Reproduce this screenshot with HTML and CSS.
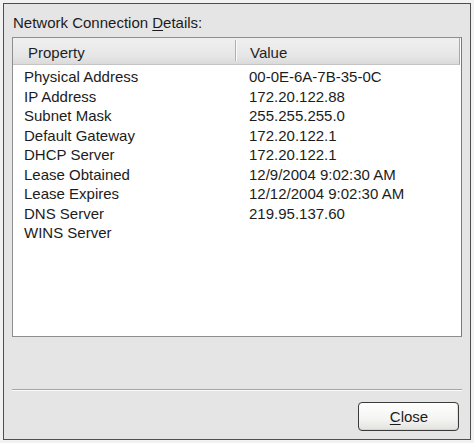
FILE: index.html
```html
<!DOCTYPE html>
<html>
<head>
<meta charset="utf-8">
<link rel="stylesheet" href="styles.css">
</head>
<body>
<div class="dialog">
  <div class="caption">Network Connection <u>D</u>etails:</div>
  <div class="list">
    <div class="header">
      <div class="hcell hprop">Property</div>
      <div class="hdiv"></div>
      <div class="hcell hval">Value</div>
    </div>
    <div class="rows">
      <div class="row"><span class="k">Physical Address</span><span class="v">00-0E-6A-7B-35-0C</span></div>
      <div class="row"><span class="k">IP Address</span><span class="v">172.20.122.88</span></div>
      <div class="row"><span class="k">Subnet Mask</span><span class="v">255.255.255.0</span></div>
      <div class="row"><span class="k">Default Gateway</span><span class="v">172.20.122.1</span></div>
      <div class="row"><span class="k">DHCP Server</span><span class="v">172.20.122.1</span></div>
      <div class="row"><span class="k">Lease Obtained</span><span class="v">12/9/2004 9:02:30 AM</span></div>
      <div class="row"><span class="k">Lease Expires</span><span class="v">12/12/2004 9:02:30 AM</span></div>
      <div class="row"><span class="k">DNS Server</span><span class="v">219.95.137.60</span></div>
      <div class="row"><span class="k">WINS Server</span><span class="v"></span></div>
    </div>
  </div>
  <div class="sep"></div>
  <div class="footer">
    <button class="btn"><u>C</u>lose</button>
  </div>
</div>
</body>
</html>
```

FILE: styles.css
```css
html, body {
  margin: 0;
  padding: 0;
  background: #f2f2f2;
}
body {
  font-family: "Liberation Sans", Arial, sans-serif;
  font-size: 15px;
  color: #1c1c1c;
}
.dialog {
  box-sizing: border-box;
  width: 468px;
  height: 437px;
  margin: 3px 0 0 3px;
  border: 1px solid #4e4e4e;
  background: #e5e5e5;
  padding: 10px 8px 7px 8px;
  display: flex;
  flex-direction: column;
}
.caption {
  height: 18px;
  line-height: 18px;
  padding-left: 1px;
  margin-bottom: 5px;
}
.caption u {
  text-decoration-thickness: 1px;
  text-underline-offset: 2px;
}
.list {
  box-sizing: border-box;
  height: 300px;
  border: 1px solid #8e8e8e;
  border-right-color: #7a7a7a;
  background: #ffffff;
  display: flex;
  flex-direction: column;
}
.header {
  display: flex;
  height: 27px;
  box-sizing: border-box;
  background: linear-gradient(#f0f0f0, #e6e6e6 70%, #dadada);
  border-bottom: 1px solid #c4c4c4;
  border-right: 1px solid #a8a8a8;
  margin-right: 1px;
}
.hcell {
  padding-top: 3px;
  line-height: 23px;
  color: #1f1f1f;
}
.hprop {
  width: 222px;
  box-sizing: border-box;
  padding-left: 15px;
}
.hdiv {
  width: 1px;
  margin: 2px 0 3px 0;
  background: #b0b0b0;
  border-right: 1px solid #fafafa;
}
.hval {
  padding-left: 13px;
}
.rows {
  padding-top: 2px;
}
.row {
  display: flex;
  height: 19.5px;
  line-height: 19.5px;
}
.k {
  width: 236px;
  box-sizing: border-box;
  padding-left: 11px;
}
.sep {
  margin-top: 52px;
  height: 1px;
  background: #a6a6a6;
  border-bottom: 1px solid #fbfbfb;
}
.footer {
  display: flex;
  justify-content: flex-end;
  margin-top: 11px;
  padding-right: 3px;
}
.btn {
  box-sizing: border-box;
  width: 101px;
  height: 29px;
  border: 1px solid #3a3a3a;
  border-radius: 4px;
  background: linear-gradient(#fefefe, #f4f4f2 60%, #e2e2de);
  box-shadow: inset 0 -1px 0 #d6d6d0, inset -1px 0 0 #e0e0dc;
  font-family: "Liberation Sans", Arial, sans-serif;
  font-size: 15px;
  color: #1c1c1c;
  padding: 0;
  padding-left: 1px;
}
.btn u {
  text-decoration-thickness: 1px;
  text-underline-offset: 2px;
}
```
